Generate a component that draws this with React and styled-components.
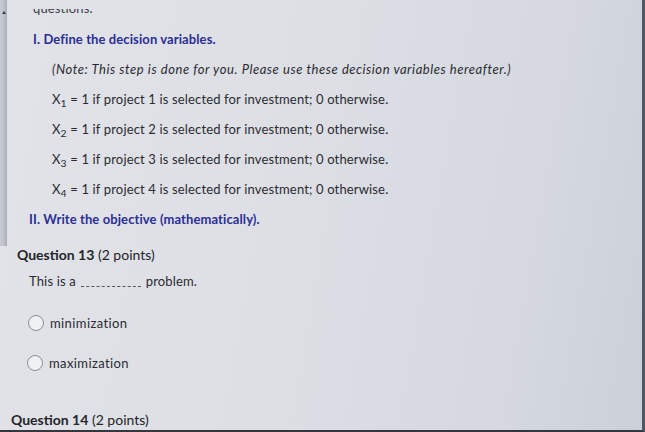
import React from "react";
import styled, { createGlobalStyle } from "styled-components";

const GlobalStyle = createGlobalStyle`
  html, body {
    margin: 0;
    padding: 0;
  }
  body {
    font-family: Lato, "Open Sans", sans-serif;
    color: #2a2b31;
  }
`;

// 화면 전체 (사진 속 모니터 느낌)
const Screen = styled.div`
  position: relative;
  width: 645px;
  height: 432px;
  overflow: hidden;
  background: linear-gradient(100deg, #e2e3e8 0%, #dddfe5 45%, #d5d8e0 80%, #cbd0d9 100%);
  border-right: 3px solid #4f5664;
  border-bottom: 2px solid #34373d;
  box-sizing: border-box;
`;

// 왼쪽 스크롤바
const ScrollTrack = styled.div`
  position: absolute;
  left: 0;
  top: 0;
  width: 7px;
  height: 246px;
  background: linear-gradient(90deg, #c9ccd3 0%, #bcc0c8 60%, #a9adb6 100%);
`;

const ScrollArrow = styled.span`
  position: absolute;
  left: 2px;
  top: 11px;
  width: 0;
  height: 0;
  border-left: 2px solid transparent;
  border-right: 2px solid transparent;
  border-bottom: 3px solid #3b3d45;
`;

const Content = styled.div`
  display: flex;
  flex-direction: column;
  font-size: 13px;
  letter-spacing: 0.15px;
`;

// 위에서 잘린 "questions."
const CutLine = styled.div`
  height: 6px;
  margin-top: 9px;
  overflow: hidden;
  display: flex;
  align-items: flex-end;
  padding-left: 33px;
  line-height: 13px;
  color: #3a3c48;
`;

const Row = styled.div`
  height: ${(p) => p.$h || 30}px;
  line-height: ${(p) => p.$h || 30}px;
  padding-left: ${(p) => p.$indent}px;
  margin-top: ${(p) => p.$mt || 0}px;
  white-space: nowrap;
`;

const Heading = styled(Row)`
  font-weight: 700;
  color: #2a2e96;
  letter-spacing: 0.1px;
`;

const Note = styled(Row)`
  font-style: italic;
  letter-spacing: 0.55px;
`;

const Sub = styled.sub`
  font-size: 0.8em;
  vertical-align: -3px;
  line-height: 0;
`;

const QuestionTitle = styled(Row)`
  font-size: 14px;
  letter-spacing: 0;
  color: #23242a;
`;

const Strong = styled.b`
  font-weight: 700;
`;

const Blank = styled.span`
  display: inline-block;
  width: 60px;
  margin: 0 5px 0 5px;
  border-bottom: 1px dashed #55575f;
  vertical-align: -1px;
`;

const Option = styled.label`
  display: flex;
  align-items: center;
  gap: 6px;
  height: 40px;
  padding-left: ${(p) => p.$indent}px;
  margin-top: ${(p) => p.$mt || 0}px;
  font-size: 13px;
  letter-spacing: 0.4px;
`;

const Radio = styled.span`
  width: 16px;
  height: 16px;
  border-radius: 50%;
  border: 1px solid #8a8d95;
  background: #eef0f3;
  box-sizing: border-box;
`;

const vars = [1, 2, 3, 4];

export default function App() {
  return (
    <Screen>
      <GlobalStyle />
      <ScrollTrack>
        <ScrollArrow />
      </ScrollTrack>
      <Content>
        <CutLine>questions.</CutLine>
        <Heading $indent={33} $mt={9}>I. Define the decision variables.</Heading>
        <Note $indent={52}>
          (Note: This step is done for you. Please use these decision variables hereafter.)
        </Note>
        {vars.map((n) => (
          <Row key={n} $indent={52}>
            X<Sub>{n}</Sub> = 1 if project {n} is selected for investment; 0 otherwise.
          </Row>
        ))}
        <Heading $indent={29}>II. Write the objective (mathematically).</Heading>
        <QuestionTitle $indent={17} $mt={6}>
          <Strong>Question 13</Strong> (2 points)
        </QuestionTitle>
        <Row $indent={29} $h={22}>
          This is a<Blank />problem.
        </Row>
        <Option $indent={28} $mt={11}>
          <Radio />
          minimization
        </Option>
        <Option $indent={27}>
          <Radio />
          maximization
        </Option>
        <QuestionTitle $indent={11} $mt={22}>
          <Strong>Question 14</Strong> (2 points)
        </QuestionTitle>
      </Content>
    </Screen>
  );
}
